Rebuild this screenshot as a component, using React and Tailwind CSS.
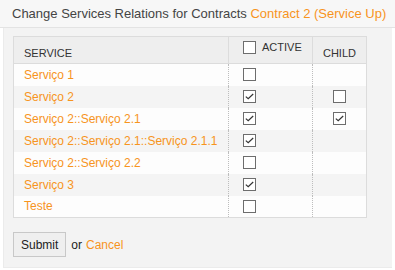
import React from 'react';

const rows = [
  { name: 'Serviço 1', active: false, child: null },
  { name: 'Serviço 2', active: true, child: false },
  { name: 'Serviço 2::Serviço 2.1', active: true, child: true },
  { name: 'Serviço 2::Serviço 2.1::Serviço 2.1.1', active: true, child: null },
  { name: 'Serviço 2::Serviço 2.2', active: false, child: null },
  { name: 'Serviço 3', active: true, child: null },
  { name: 'Teste', active: false, child: null },
];

function Box({ checked }) {
  return (
    <span className="inline-flex w-[13px] h-[13px] border border-[#6d6d6d] bg-white items-center justify-center align-middle">
      {checked && (
        <svg width="9" height="7" viewBox="0 0 9 7" fill="none">
          <path d="M0.8 3.6 L3.2 5.8 L8.2 1" stroke="#333" strokeWidth="1.2" />
        </svg>
      )}
    </span>
  );
}

export default function App() {
  return (
    <div className="w-[395px] h-[270px] bg-white font-['Liberation_Sans',Arial,sans-serif] text-[#333]">
      <div className="h-[28px] bg-[#f7f7f7] border-b border-[#e3e3e3] pl-[12px] pt-[6px] text-[13px] leading-[16px] text-[#444] whitespace-nowrap">
        Change Services Relations for Contracts <span className="text-[#f7941d]">Contract 2 (Service Up)</span>
      </div>
      <div className="ml-[3px] mr-[3px] h-[240px] bg-[#f3f3f3] border-l border-b border-[#ebebeb] pl-[9px] pt-[8px]">
        <table className="w-[354px] border border-[#dcdcdc] border-collapse text-[12px]">
          <thead>
            <tr className="bg-[#eeeeee] h-[27px] text-[11px] text-[#333]">
              <th className="text-left font-normal pl-[10px] pt-[6px] w-[215px] border-b border-[#dcdcdc]">SERVICE</th>
              <th className="text-left font-normal pl-[14px] w-[84px] border-l border-b border-[#dcdcdc]">
                <span className="inline-flex items-center gap-[6px] mt-[-3px]">
                  <span className="inline-block w-[13px] h-[13px] border border-[#6d6d6d] bg-white"></span>
                  ACTIVE
                </span>
              </th>
              <th className="font-normal pt-[6px] border-l border-b border-[#dcdcdc]">CHILD</th>
            </tr>
          </thead>
          <tbody>
            {rows.map((r, i) => (
              <tr key={r.name} className={`h-[22px] ${i % 2 ? 'bg-[#f4f4f4]' : 'bg-[#fdfdfd]'}`}>
                <td className="pl-[10px] text-[#f7941d] whitespace-nowrap">{r.name}</td>
                <td className="pl-[14px] border-l border-dotted border-[#bdbdbd] leading-none">
                  <Box checked={r.active} />
                </td>
                <td className="text-center border-l border-dotted border-[#bdbdbd] leading-none">
                  {r.child !== null && <Box checked={r.child} />}
                </td>
              </tr>
            ))}
          </tbody>
        </table>
        <div className="mt-[14px] flex items-center text-[12px]">
          <button className="h-[25px] px-[7px] bg-[#efefef] border border-[#c8c8c8] text-[#222] text-[12px]">Submit</button>
          <span className="ml-[5px] text-[#222]">or</span>
          <span className="ml-[4px] text-[#f7941d]">Cancel</span>
        </div>
      </div>
    </div>
  );
}
